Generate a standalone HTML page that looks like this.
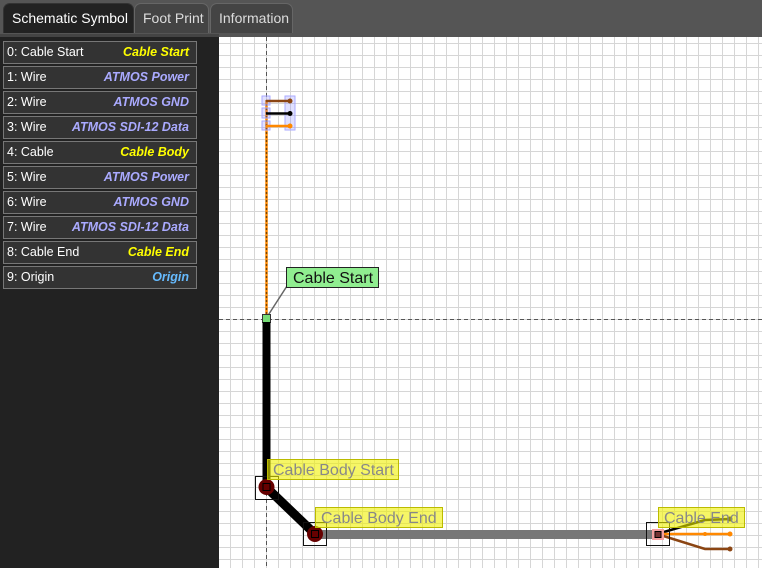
<!DOCTYPE html>
<html><head><meta charset="utf-8"><style>
*{margin:0;padding:0;box-sizing:border-box}
body{width:762px;height:568px;overflow:hidden;background:#222;font-family:"Liberation Sans",sans-serif;position:relative}
.tabs{position:absolute;left:0;top:0;width:762px;height:37px;background:#555}
.tab{position:absolute;top:3px;height:30px;border-radius:7px 7px 0 0;color:#ddd;font-size:14px;line-height:28px;padding-left:8px;background:#444;border:1px solid #666;border-bottom:none}
.tab.a{background:#222;color:#fff;border-color:#333}
.bar{position:absolute;left:0;top:34px;width:219px;height:3px;background:#444}
.panel{position:absolute;left:0;top:37px;width:219px;height:531px;background:#222}
.row{position:absolute;left:3px;width:194px;height:23px;background:#333;border:1px solid #777;color:#fff;font-size:12.5px;line-height:21px;padding-left:3px}
.row i{position:absolute;right:7px;top:0;font-weight:bold;font-size:12.5px}
.y{color:#ff0}.b{color:#aaf}.c{color:#6bf}
svg{position:absolute;left:219px;top:37px}
</style></head><body>
<div class="tabs">
<div class="tab a" style="left:3px;width:131px">Schematic Symbol</div>
<div class="tab" style="left:134px;width:75px">Foot Print</div>
<div class="tab" style="left:210px;width:83px">Information</div>
</div>
<div class="panel">
<div class="row" style="top:4px">0: Cable Start<i class="y">Cable Start</i></div>
<div class="row" style="top:29px">1: Wire<i class="b">ATMOS Power</i></div>
<div class="row" style="top:54px">2: Wire<i class="b">ATMOS GND</i></div>
<div class="row" style="top:79px">3: Wire<i class="b">ATMOS SDI-12 Data</i></div>
<div class="row" style="top:104px">4: Cable<i class="y">Cable Body</i></div>
<div class="row" style="top:129px">5: Wire<i class="b">ATMOS Power</i></div>
<div class="row" style="top:154px">6: Wire<i class="b">ATMOS GND</i></div>
<div class="row" style="top:179px">7: Wire<i class="b">ATMOS SDI-12 Data</i></div>
<div class="row" style="top:204px">8: Cable End<i class="y">Cable End</i></div>
<div class="row" style="top:229px">9: Origin<i class="c">Origin</i></div>
</div>
<div class="bar"></div>
<svg width="543" height="531" viewBox="219 37 543 531">
<defs><pattern id="g" x="2" y="7" width="12" height="12" patternUnits="userSpaceOnUse"><path d="M0 0H12M0 0V12" stroke="#d6d6d6" stroke-width="2" fill="none"/></pattern></defs>
<rect x="219" y="37" width="543" height="531" fill="#fff"/>
<rect x="219" y="37" width="543" height="531" fill="url(#g)"/>
<line x1="266.5" y1="37" x2="266.5" y2="568" stroke="#555" stroke-dasharray="4,3"/>
<line x1="219" y1="319.5" x2="762" y2="319.5" stroke="#555" stroke-dasharray="4,3"/>
<line x1="266.5" y1="100" x2="266.5" y2="319" stroke="#f80" stroke-width="2.5"/>
<line x1="266.5" y1="100" x2="266.5" y2="319" stroke="#740" stroke-width="1.5" stroke-dasharray="2,2"/>
<g fill="rgba(130,130,255,.25)" stroke="#aaf">
<rect x="262" y="96" width="8" height="9"/><rect x="285" y="96" width="10" height="34"/><rect x="262" y="108" width="8" height="10"/><rect x="262" y="121" width="8" height="9"/></g>
<line x1="266" y1="101" x2="290" y2="101" stroke="#8b4513" stroke-width="2.5"/>
<line x1="266" y1="113.5" x2="290" y2="113.5" stroke="#000" stroke-width="2.5"/>
<line x1="266" y1="126" x2="290" y2="126" stroke="#f80" stroke-width="2.5"/>
<circle cx="290" cy="101" r="2.5" fill="#8b4513"/><circle cx="290" cy="113.5" r="2.5" fill="#000"/><circle cx="290" cy="126" r="2.5" fill="#f80"/>
<line x1="267" y1="317" x2="287" y2="286" stroke="#666" stroke-width="1.5"/>
<rect x="286.5" y="267.5" width="92" height="20" fill="#90ee90" stroke="#222"/>
<text x="293" y="283" font-size="16" fill="#111" font-family="Liberation Sans">Cable Start</text>
<rect x="262.5" y="314.5" width="8" height="8" fill="#7d7" stroke="#333"/>
<line x1="266.5" y1="322" x2="266.5" y2="487" stroke="#000" stroke-width="8"/>
<line x1="266" y1="487" x2="315" y2="534" stroke="#000" stroke-width="9"/>
<line x1="315" y1="534.5" x2="657" y2="534.5" stroke="#777" stroke-width="9"/>
<g stroke-width="2.5" fill="none">
<polyline points="657,534 705,520 730,519" stroke="#000"/>
<polyline points="657,534 730,534" stroke="#f80"/>
<polyline points="657,534 705,549 730,549" stroke="#8b4513"/></g>
<circle cx="730" cy="519" r="2.5" fill="#000"/><circle cx="705" cy="534" r="2" fill="#f80"/><circle cx="730" cy="534" r="2.5" fill="#f80"/><circle cx="730" cy="549" r="2.5" fill="#8b4513"/>
<circle cx="266.5" cy="487" r="8" fill="#600"/><rect x="263" y="483.5" width="7" height="7" fill="none" stroke="#000"/>
<circle cx="315" cy="534" r="8" fill="#600"/><rect x="311.5" y="530.5" width="7" height="7" fill="none" stroke="#000"/>
<rect x="652" y="529" width="12" height="11" fill="#f4a0a0"/><rect x="655" y="531.5" width="6" height="6" fill="#733" stroke="#000"/>
<g fill="none" stroke="#111"><rect x="255.5" y="476.5" width="23" height="23"/><rect x="303.5" y="522.5" width="23" height="23"/><rect x="646.5" y="522.5" width="23" height="23"/></g>
<g fill="rgba(240,240,0,.6)" stroke="#bb0"><rect x="267.5" y="459.5" width="131" height="20"/><rect x="315.5" y="507.5" width="127" height="20"/><rect x="658.5" y="507.5" width="86" height="20"/></g>
<g font-size="16" fill="#888" font-family="Liberation Sans"><text x="273" y="475">Cable Body Start</text><text x="321" y="523">Cable Body End</text><text x="664" y="523">Cable End</text></g>
</svg>
</body></html>
